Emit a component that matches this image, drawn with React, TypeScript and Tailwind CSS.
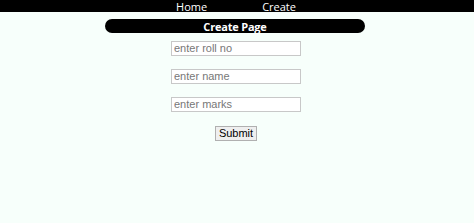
import React from "react";

const fields = ["enter roll no", "enter name", "enter marks"];

const App = () => {
  return (
    <div className="min-h-[223px] bg-[#f7fffb]" style={{ fontFamily: "'Open Sans', sans-serif" }}>
      <nav className="flex h-[12px] items-center justify-center gap-[55px] bg-black text-[11px] leading-none text-white">
        <a className="ml-[-2px]">Home</a>
        <a>Create</a>
      </nav>
      <div className="flex flex-col items-center">
        <h1 className="mt-[7px] ml-[-4px] flex h-[14px] w-[260px] items-center justify-center rounded-full bg-black text-[11px] font-bold leading-none tracking-[-0.2px] text-white">
          Create Page
        </h1>
        <form className="ml-[-2px] flex flex-col items-center" style={{ fontFamily: "'Liberation Sans', Arial, sans-serif" }}>
          {fields.map((f, i) => (
            <input
              key={f}
              placeholder={f}
              className={`${i === 0 ? "mt-[8px]" : "mt-[13px]"} h-[15px] w-[130px] border border-[#c8c8c8] bg-white px-[2px] text-[11px] placeholder:text-[#777]`}
            />
          ))}
          <button
            type="button"
            className="mt-[14px] h-[15px] border border-[#b0b0b0] bg-[#efefef] px-[3px] text-[11px] leading-none text-black"
          >
            Submit
          </button>
        </form>
      </div>
    </div>
  );
};

export default App;
